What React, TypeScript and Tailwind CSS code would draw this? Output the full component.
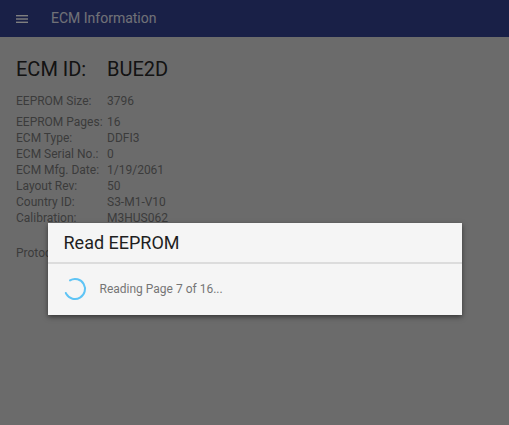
import React from 'react';

const rows: [string, string][] = [
  ['EEPROM Pages:', '16'],
  ['ECM Type:', 'DDFI3'],
  ['ECM Serial No.:', '0'],
  ['ECM Mfg. Date:', '1/19/2061'],
  ['Layout Rev:', '50'],
  ['Country ID:', 'S3-M1-V10'],
  ['Calibration:', 'M3HUS062'],
];

function Spinner() {
  return (
    <svg width="24" height="24" viewBox="0 0 24 24" className="shrink-0">
      <circle
        cx="12"
        cy="12"
        r="10"
        fill="none"
        stroke="#5ec4f5"
        strokeWidth="2"
        strokeLinecap="round"
        strokeDasharray="48 63"
        transform="rotate(-120 12 12)"
      />
    </svg>
  );
}

export default function App() {
  return (
    <div className="relative h-[425px] w-[509px] overflow-hidden bg-[#d7d7d7]" style={{ fontFamily: 'Roboto, "Noto Sans", sans-serif' }}>
      {/* app bar */}
      <div className="flex h-[37px] items-center bg-[#33408f] pl-4 text-white">
        <svg width="12" height="10" viewBox="0 0 12 10" className="mt-[1px]">
          <rect x="0" y="1" width="12" height="1.4" fill="currentColor" />
          <rect x="0" y="4.3" width="12" height="1.4" fill="currentColor" />
          <rect x="0" y="7.6" width="12" height="1.4" fill="currentColor" />
        </svg>
        <span className="ml-[23px] text-[14px] opacity-85">ECM Information</span>
      </div>

      {/* content */}
      <div className="px-4 pt-[17px]">
        <div className="flex text-[20px] leading-[30px] text-[#262626]">
          <span className="w-[91px]">ECM ID:</span>
          <span>BUE2D</span>
        </div>
        <div className="mt-[9px] flex text-[12px] leading-4 text-[#777]">
          <span className="w-[91px]">EEPROM Size:</span>
          <span>3796</span>
        </div>
        <div className="mt-[5px]">
          {rows.map(([k, v]) => (
            <div key={k} className="flex text-[12px] leading-[16px] text-[#777]">
              <span className="w-[91px]">{k}</span>
              <span>{v}</span>
            </div>
          ))}
        </div>
        <div className="mt-[19px] text-[12px] leading-4 text-[#777]">Protocol:</div>
      </div>

      {/* scrim + dialog */}
      <div className="absolute inset-0 flex justify-center bg-black/50 pt-[223px]">
        <div className="h-[92px] w-[414px] bg-[#f5f5f5] shadow-[0_2px_5px_rgba(0,0,0,0.5)]">
          <div className="flex h-[41px] items-center border-b-2 border-[#dcdcdc] pl-4 text-[18px] text-[#1f1f1f]">
            Read EEPROM
          </div>
          <div className="flex h-[49px] items-center pl-[15px]">
            <Spinner />
            <span className="ml-[13px] text-[12px] text-[#757575]">Reading Page 7 of 16...</span>
          </div>
        </div>
      </div>
    </div>
  );
}
